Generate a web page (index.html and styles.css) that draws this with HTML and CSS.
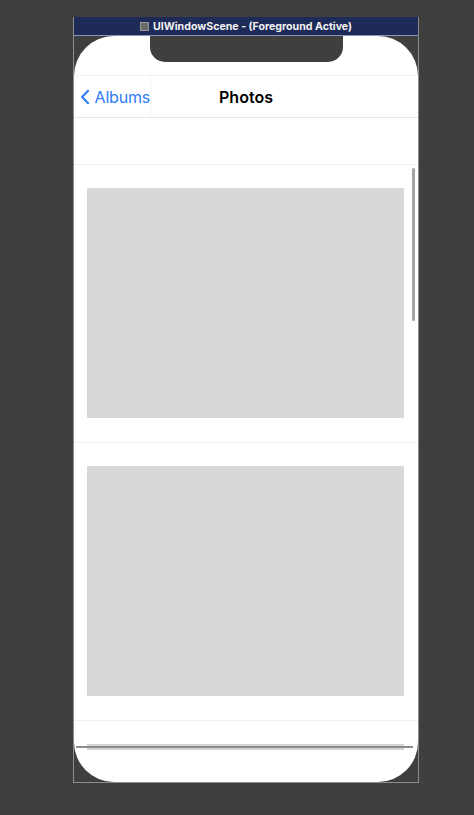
FILE: index.html
```html
<!DOCTYPE html>
<html lang="en">
<head>
    <meta charset="UTF-8">
    <meta name="viewport" content="width=device-width, initial-scale=1.0">
    <title>Photos</title>
    <link rel="stylesheet" href="styles.css">
</head>
<body>
<div class="window">
    <!-- title bar of the scene window -->
    <div class="titlebar">
        <span class="title-icon"></span>
        <span class="title-text">UIWindowScene - (Foreground Active)</span>
    </div>
    <div class="screen">
        <div class="notch"></div>
        <div class="status"></div>
        <div class="navbar">
            <div class="back">
                <svg class="chevron" width="13" height="20" viewBox="0 0 13 20">
                    <path d="M11 1.5 L2.8 10 L11 18.5" fill="none" stroke="#2f7cf6" stroke-width="2.8" stroke-linecap="round" stroke-linejoin="round"/>
                </svg>
                <span>Albums</span>
            </div>
            <div class="nav-title">Photos</div>
        </div>
        <div class="header-cell"></div>
        <!-- photo cells -->
        <div class="cell"><div class="photo"></div></div>
        <div class="cell"><div class="photo"></div></div>
        <div class="rest"></div>
        <div class="scroll-v"></div>
        <div class="scroll-h"><div class="scroll-h-line"></div></div>
    </div>
</div>
</body>
</html>
```
FILE: styles.css
```css
body {
    margin: 0;
    padding: 0;
    background-color: #3f3f3f;
    font-family: Inter, "Liberation Sans", sans-serif;
}

.window {
    margin: 17px 0 0 73px;
    width: 344px;
    border: 1px solid #8c8c8c;
    border-top: none;
    background-color: #3f3f3f;
}

.titlebar {
    height: 19px;
    background-color: #1e2a58;
    border-bottom: 1px solid #8f97b5;
    display: flex;
    align-items: center;
    justify-content: center;
    gap: 4px;
    padding-top: 1px;
    box-sizing: border-box;
    color: #f2f2f2;
    font-size: 10.6px;
    font-weight: 700;
}

.title-icon {
    width: 7px;
    height: 7px;
    border: 1px solid #9a9a9a;
    background-color: #6a6a6a;
}

.screen {
    position: relative;
    height: 746px;
    background-color: #fff;
    border-radius: 40px;
    overflow: hidden;
    display: flex;
    flex-direction: column;
}

.notch {
    position: absolute;
    left: 76px;
    top: 0;
    width: 193px;
    height: 26px;
    background-color: #3f3f3f;
    border-radius: 0 0 15px 15px;
}

.status {
    height: 39px;
    border-bottom: 1px solid #f3f3f3;
}

.navbar {
    height: 41px;
    border-bottom: 1px solid #e6e6e6;
    display: flex;
    align-items: center;
    position: relative;
}

.back {
    width: 77px;
    height: 100%;
    display: flex;
    align-items: center;
    gap: 5px;
    padding-left: 6px;
    box-sizing: border-box;
    border-right: 1px solid #f4f4f4;
    color: #2f7cf6;
    font-size: 16px;
    letter-spacing: -0.2px;
}

.nav-title {
    position: absolute;
    left: 0;
    right: 0;
    text-align: center;
    font-size: 16px;
    font-weight: 600;
    color: #000;
    pointer-events: none;
}

.header-cell {
    height: 46px;
    border-bottom: 1px solid #f0f0f0;
}

.cell {
    padding: 23px 14px 24px 13px;
    border-bottom: 1px solid #f0f0f0;
}

.photo {
    height: 230px;
    background-color: #d8d8d8;
}

.rest {
    flex: 1;
}

.scroll-v {
    position: absolute;
    right: 3px;
    top: 132px;
    width: 3px;
    height: 153px;
    border-radius: 2px;
    background-color: #a3a3a3;
}

.scroll-h {
    position: absolute;
    left: 2px;
    right: 5px;
    top: 708px;
    height: 6px;
}

.scroll-h::before {
    content: "";
    position: absolute;
    left: 11px;
    right: 9px;
    top: 0;
    height: 6px;
    background-color: #d4d4d4;
}

.scroll-h-line {
    position: absolute;
    left: 0;
    right: 0;
    top: 2px;
    height: 2px;
    background-color: #8e8e8e;
}
```
